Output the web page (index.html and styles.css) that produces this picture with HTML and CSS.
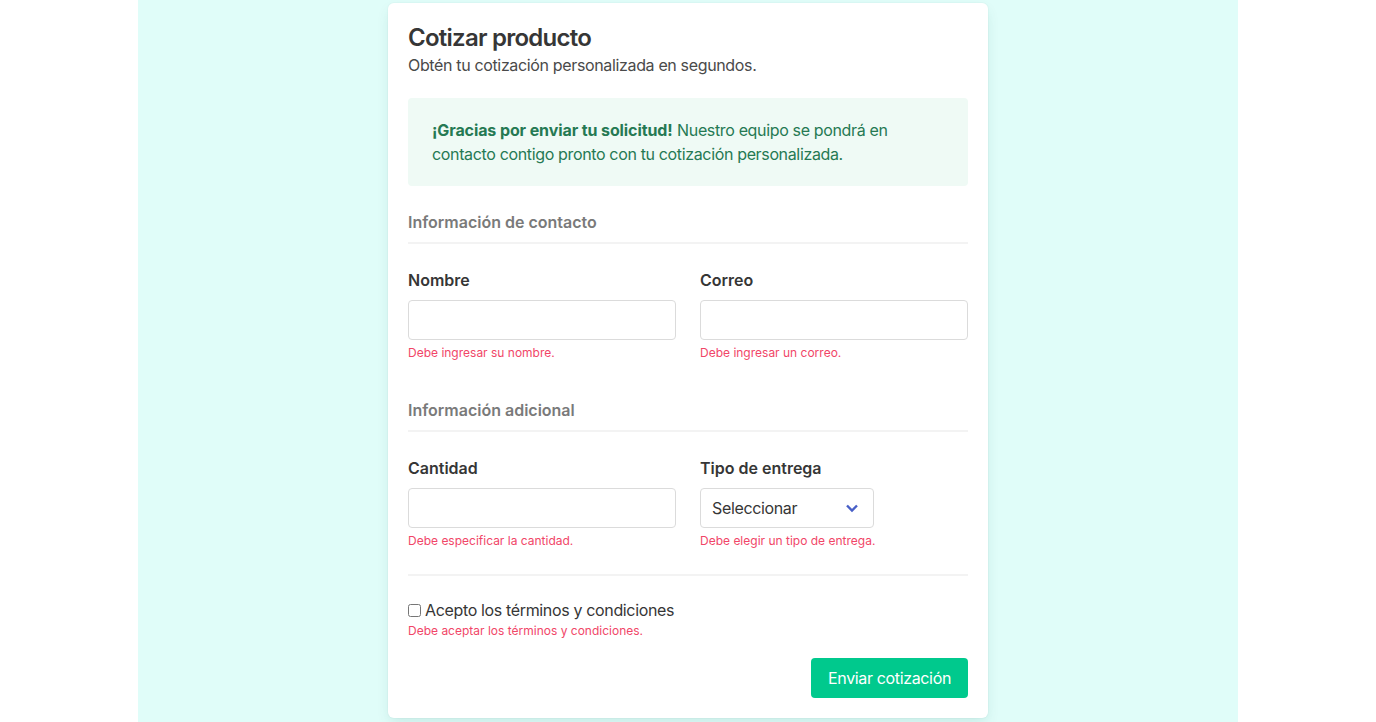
FILE: index.html
```html
<!DOCTYPE html>
<html lang="es">
<head>
    <meta charset="UTF-8">
    <meta name="viewport" content="width=device-width, initial-scale=1.0">
    <title>Cotizar producto</title>
    <link rel="stylesheet" href="styles.css">
</head>
<body>
    <div class="stage">
        <div class="card">
            <h1>Cotizar producto</h1>
            <p class="subtitle">Obtén tu cotización personalizada en segundos.</p>

            <div class="notification">
                <strong>¡Gracias por enviar tu solicitud!</strong> <span>Nuestro equipo se pondrá en
                contacto contigo pronto con tu cotización personalizada.</span>
            </div>

            <h2 class="section-title">Información de contacto</h2>
            <div class="row">
                <div class="field">
                    <label for="nombre">Nombre</label>
                    <input type="text" id="nombre">
                    <p class="help">Debe ingresar su nombre.</p>
                </div>
                <div class="field">
                    <label for="correo">Correo</label>
                    <input type="email" id="correo">
                    <p class="help">Debe ingresar un correo.</p>
                </div>
            </div>

            <h2 class="section-title spaced">Información adicional</h2>
            <div class="row">
                <div class="field">
                    <label for="cantidad">Cantidad</label>
                    <input type="text" id="cantidad">
                    <p class="help">Debe especificar la cantidad.</p>
                </div>
                <div class="field">
                    <label for="entrega">Tipo de entrega</label>
                    <div class="select-wrap">
                        <select id="entrega">
                            <option>Seleccionar</option>
                            <option>Envío a domicilio</option>
                            <option>Retiro en tienda</option>
                        </select>
                        <svg class="chevron" width="14" height="10" viewBox="0 0 14 10"><path d="M2 2.5 L7 7.5 L12 2.5" fill="none" stroke="#485fc7" stroke-width="2.4"/></svg>
                    </div>
                    <p class="help">Debe elegir un tipo de entrega.</p>
                </div>
            </div>

            <div class="divider"></div>

            <label class="checkbox"><input type="checkbox"> Acepto los términos y condiciones</label>
            <p class="help tight">Debe aceptar los términos y condiciones.</p>

            <div class="actions">
                <button type="submit">Enviar cotización</button>
            </div>
        </div>
    </div>
</body>
</html>
```

FILE: styles.css
```css
body {
    margin: 0;
    background: #ffffff;
    font-family: 'Inter', 'Noto Sans', sans-serif;
    color: #4a4a4a;
}

.stage {
    width: 1100px;
    min-height: 722px;
    margin: 0 auto;
    background: #e0fdf9;
    padding-top: 3px;
    box-sizing: border-box;
}

.card {
    width: 600px;
    margin: 0 auto;
    padding: 20px;
    box-sizing: border-box;
    background: white;
    border-radius: 6px;
    box-shadow: 0 6px 14px -2px rgba(0, 90, 80, 0.12), 0 0 0 1px rgba(0, 60, 50, 0.02);
}

h1 {
    margin: 0;
    font-size: 24px;
    line-height: 30px;
    font-weight: 600;
    color: #363636;
    letter-spacing: -0.75px;
}

.subtitle {
    margin: 0;
    font-size: 16px;
    line-height: 24px;
    color: #4a4a4a;
    letter-spacing: -0.35px;
}

.notification {
    margin-top: 21px;
    padding: 20px 24px;
    background: #effaf5;
    color: #257953;
    border-radius: 4px;
    font-size: 16px;
    line-height: 24px;
}

.notification strong {
    font-weight: 700;
    letter-spacing: -0.1px;
}

.notification span {
    letter-spacing: -0.35px;
}

.section-title {
    margin: 24px 0 0;
    padding-bottom: 8px;
    font-size: 16px;
    line-height: 24px;
    font-weight: 600;
    color: #7a7a7a;
    border-bottom: 2px solid #f3f3f3;
}

.section-title.spaced {
    margin-top: 36px;
}

.row {
    display: flex;
    gap: 24px;
    margin-top: 24px;
}

.field {
    flex: 1;
}

.field label {
    display: block;
    font-size: 16px;
    line-height: 24px;
    font-weight: 600;
    color: #363636;
    margin-bottom: 8px;
}

.field input {
    width: 100%;
    height: 40px;
    box-sizing: border-box;
    border: 1px solid #dbdbdb;
    border-radius: 4px;
    padding: 0 11px;
    font-size: 16px;
    outline: none;
}

.select-wrap {
    position: relative;
    width: 174px;
}

.select-wrap select {
    width: 100%;
    height: 40px;
    box-sizing: border-box;
    appearance: none;
    -webkit-appearance: none;
    border: 1px solid #dbdbdb;
    border-radius: 4px;
    background: white;
    padding: 0 36px 0 11px;
    font-family: inherit;
    font-size: 16px;
    letter-spacing: -0.35px;
    color: #363636;
    outline: none;
}

.chevron {
    position: absolute;
    right: 15px;
    top: 15px;
    pointer-events: none;
}

.help {
    margin: 4px 0 0;
    font-size: 12px;
    line-height: 18px;
    color: #f14668;
}

.help.tight {
    margin-top: 0;
}

.divider {
    margin-top: 24px;
    border-top: 2px solid #f3f3f3;
}

.checkbox {
    display: flex;
    align-items: center;
    margin-top: 22px;
    font-size: 16px;
    line-height: 24px;
    color: #363636;
    letter-spacing: -0.35px;
}

.checkbox input {
    margin: 0 4px 0 0;
    width: 13px;
    height: 13px;
}

.actions {
    display: flex;
    justify-content: flex-end;
    margin-top: 18px;
}

button {
    height: 40px;
    padding: 0 17px;
    background: #00c98d;
    border: none;
    border-radius: 4px;
    color: white;
    font-family: inherit;
    font-size: 16px;
    letter-spacing: -0.35px;
    cursor: pointer;
}
```
